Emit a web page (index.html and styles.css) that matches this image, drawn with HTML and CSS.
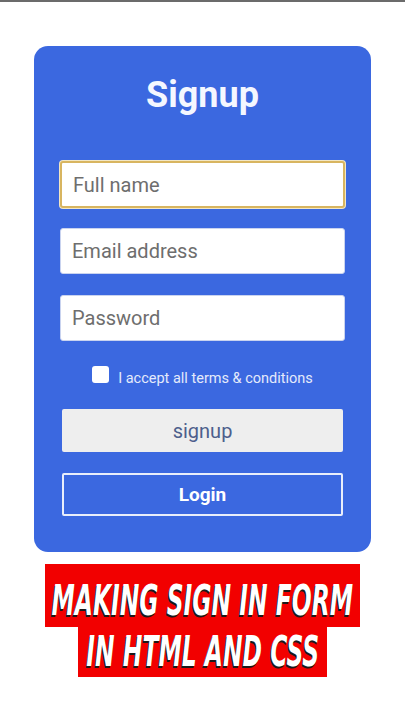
FILE: index.html
```html
<!DOCTYPE html>
<html lang="en">
<head>
    <meta charset="UTF-8">
    <meta name="viewport" content="width=device-width, initial-scale=1.0">
    <title>Signup Form</title>
    <link rel="stylesheet" href="styles.css">
</head>
<body>
    <div class="topbar"></div>

    <!-- signup card -->
    <form class="signup-card" onsubmit="return false">
        <h2>Signup</h2>
        <input type="text" class="field focused" placeholder="Full name" autofocus>
        <input type="email" class="field" placeholder="Email address">
        <input type="password" class="field" placeholder="Password">
        <label class="terms">
            <input type="checkbox">
            <span>I accept all terms &amp; conditions</span>
        </label>
        <button type="submit" class="btn-signup">signup</button>
        <button type="button" class="btn-login">Login</button>
    </form>

    <!-- caption banner -->
    <div class="banner">
        <div class="banner-line line-one"><span>MAKING SIGN IN FORM</span></div>
        <div class="banner-line line-two"><span>IN HTML AND CSS</span></div>
    </div>
</body>
</html>
```

FILE: styles.css
```css
/* reset */
* {
    margin: 0;
    padding: 0;
    box-sizing: border-box;
}

body {
    font-family: Roboto, "Liberation Sans", sans-serif;
    background-color: #ffffff;
}

.topbar {
    height: 2px;
    background-color: #6b6b6b;
}

/* card */
.signup-card {
    width: 337px;
    margin: 44px auto 0;
    padding: 28px 26px 36px;
    background-color: #3b68e0;
    border-radius: 14px;
    display: flex;
    flex-direction: column;
    align-items: center;
}

.signup-card h2 {
    font-size: 36px;
    font-weight: 700;
    line-height: 1.2;
    color: #f4f7ff;
    margin-bottom: 44px;
}

.field {
    width: 285px;
    height: 46px;
    padding: 0 11px;
    font-family: Roboto, "Liberation Sans", sans-serif;
    font-size: 20px;
    color: #333;
    background: #fff;
    border: 1px solid #c9d3ef;
    border-radius: 3px;
    outline: none;
    margin-bottom: 21px;
}

.field::placeholder {
    color: #6e6e6e;
}

.field.focused {
    height: 47px;
    border: 2px solid #d8b560;
    box-shadow: 0 0 0 1px #f2e6c4;
    margin-bottom: 20px;
}

.field:last-of-type {
    margin-bottom: 0;
}

/* terms checkbox */
.terms {
    display: flex;
    align-items: flex-start;
    gap: 9px;
    margin-top: 25px;
    color: #e4eafb;
    font-size: 14.5px;
}

.terms input {
    appearance: none;
    width: 17px;
    height: 17px;
    background: #fff;
    border-radius: 3px;
}

.terms span {
    line-height: 17px;
    padding-top: 4px;
}

/* buttons */
.btn-signup,
.btn-login {
    width: 281px;
    height: 43px;
    border-radius: 2px;
    font-family: Roboto, "Liberation Sans", sans-serif;
    cursor: pointer;
}

.btn-signup {
    margin-top: 22px;
    background-color: #eeeeee;
    border: none;
    color: #4d5f8c;
    font-size: 20px;
}

.btn-login {
    margin-top: 21px;
    background: transparent;
    border: 2px solid #e9eefb;
    color: #ffffff;
    font-size: 19px;
    font-weight: 700;
}

/* banner */
.banner {
    margin-top: 12px;
    display: flex;
    flex-direction: column;
    align-items: center;
}

.banner-line {
    background-color: #f20000;
    display: flex;
    align-items: center;
    justify-content: center;
    overflow: hidden;
}

.line-one {
    width: 315px;
    height: 63px;
    padding-top: 10px;
}

.line-two {
    width: 249px;
    height: 50px;
}

.banner-line span {
    display: inline-block;
    white-space: nowrap;
    font-family: "DejaVu Sans Condensed", "DejaVu Sans", sans-serif;
    font-weight: 700;
    font-style: italic;
    font-size: 42px;
    line-height: 1;
    color: #ffffff;
    text-shadow: -2px 2px 0 #1a1a1a;
    transform: scaleX(0.62);
}
```
